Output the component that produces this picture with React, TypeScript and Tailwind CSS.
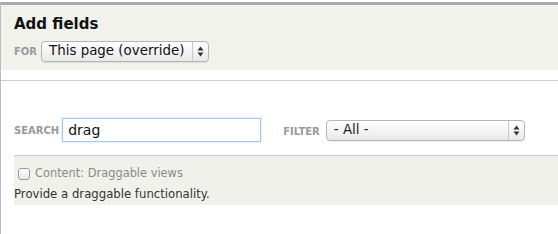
import React from "react";

// =============================================================================
// Small pieces
// =============================================================================

const font = { fontFamily: '"DejaVu Sans", Verdana, sans-serif' };

function Label({ children }: { children: React.ReactNode }) {
  return (
    <span className="text-[10px] font-bold uppercase text-[#999]">{children}</span>
  );
}

function Arrows() {
  return (
    <svg width="7" height="11" viewBox="0 0 7 11" className="text-[#333]">
      <path d="M3.5 0.5 L6.5 4.5 L0.5 4.5 Z" fill="currentColor" />
      <path d="M3.5 10.5 L6.5 6.5 L0.5 6.5 Z" fill="currentColor" />
    </svg>
  );
}

interface FakeSelectProps {
  value: string;
  width: string;
  textClass?: string;
}

function FakeSelect({ value, width, textClass = "" }: FakeSelectProps) {
  return (
    <div
      className={`flex items-stretch h-[21px] rounded-[4px] border border-[#b5b5b5] bg-gradient-to-b from-white to-[#e9e9e9] shadow-[0_1px_1px_rgba(0,0,0,0.08)] ${width}`}
    >
      <span className={`flex-1 flex items-center pl-[7px] text-[13.4px] text-[#111] ${textClass}`}>
        {value}
      </span>
      <span className="w-[16px] flex items-center justify-center border-l border-[#c8c8c8]">
        <Arrows />
      </span>
    </div>
  );
}

// =============================================================================
// App
// =============================================================================

export default function App() {
  return (
    <div className="w-[558px] h-[234px] bg-white overflow-hidden pt-[2px]" style={font}>
      <div className="h-[232px] border-t-[3px] border-[#aaa] border-l border-l-[#bdbdbd]">
        {/* Header */}
        <div className="bg-[#f2f2ec] h-[65px] px-[13px] pt-[10px]">
          <h2 className="text-[15px] font-bold text-[#111] leading-[18px]">Add fields</h2>
          <div className="flex items-center gap-[4px] mt-[8px]">
            <Label>For</Label>
            <FakeSelect value="This page (override)" width="w-[168px]" />
          </div>
        </div>

        {/* Divider */}
        <div className="mt-[10px] border-t border-[#cccccc]" />

        {/* Search row */}
        <div className="flex items-center px-[13px] mt-[37px]">
          <Label>Search</Label>
          <div className="ml-[3px] w-[199px] h-[24px] border border-[#a4c6ef] shadow-[0_0_2px_rgba(120,170,230,0.5)] flex items-center pl-[5px] text-[14px] text-[#111]">
            drag
          </div>
          <span className="ml-[22px] mr-[6px]">
            <Label>Filter</Label>
          </span>
          <FakeSelect value="- All -" width="w-[199px]" textClass="text-[#222]" />
        </div>

        {/* Results */}
        <div className="ml-[13px] mt-[13px] h-[50px] bg-[#f1f1eb] border-t border-[#cccccc] pt-[9px]">
          <div className="flex items-center gap-[5px] pl-[4px]">
            <span className="w-[12px] h-[12px] rounded-[3px] border border-[#9a9a9a] bg-gradient-to-b from-white to-[#e6e6e6]" />
            <span className="text-[11.4px] text-[#8a8a8a]">Content: Draggable views</span>
          </div>
          <div className="mt-[4px] text-[11.7px] text-[#333]">Provide a draggable functionality.</div>
        </div>
      </div>
    </div>
  );
}
